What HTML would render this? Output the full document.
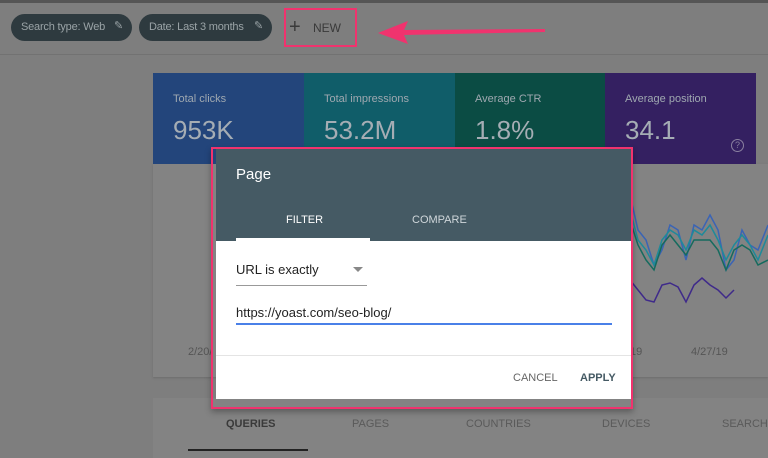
<!DOCTYPE html>
<html><head><style>
body{margin:0;width:768px;height:451px;overflow:hidden;background:#7e7e7e;font-family:"Liberation Sans",sans-serif;position:relative}
.a{position:absolute}
.chip{background:#2e3a3f;color:#9aa3a6;border-radius:14px;height:27px;top:14px;font-size:11px;line-height:27px;padding-left:10px;box-sizing:border-box;white-space:nowrap;letter-spacing:-0.2px}
.card{top:73px;height:91px;width:151px}
.card .l{position:absolute;left:20px;top:20px;font-size:11px;color:#9fa8b0}
.card .v{position:absolute;left:20px;top:42px;font-size:26px;color:#a5adb4}
.tab{font-size:11px;color:#5a5a5a;top:418px}
</style></head><body>
<div class="a" style="left:0;top:0;width:768px;height:3px;background:#555"></div>
<div class="a" style="left:0;top:54px;width:768px;height:1px;background:#727272"></div>
<div class="chip a" style="left:11px;width:121px">Search type: Web <span style="position:absolute;right:9px;top:-1px">✎</span></div>
<div class="chip a" style="left:139px;width:133px">Date: Last 3 months <span style="position:absolute;right:9px;top:-1px">✎</span></div>
<div class="a" style="left:284px;top:8px;width:69px;height:35px;border:2px solid #f0336e"></div>
<div class="a" style="left:289px;top:16px;font-size:20px;color:#3a3a3a">+</div>
<div class="a" style="left:313px;top:21px;font-size:12px;color:#3a3a3a">NEW</div>
<svg class="a" style="left:370px;top:18px" width="180" height="30"><polygon points="8,15 38,3 34,12 175,11 175,14 34,17 38,26" fill="#f0336e"/></svg>
<div class="a" style="left:153px;top:164px;width:615px;height:213px;background:#838383;box-shadow:0 1px 2px #6c6c6c"></div>
<div class="a" style="left:153px;top:398px;width:615px;height:60px;background:#838383"></div>
<div class="card a" style="left:153px;background:#23457b"><div class="l">Total clicks</div><div class="v">953K</div></div>
<div class="card a" style="left:304px;background:#105d69"><div class="l">Total impressions</div><div class="v">53.2M</div></div>
<div class="card a" style="left:455px;background:#0b4c44"><div class="l">Average CTR</div><div class="v">1.8%</div></div>
<div class="card a" style="left:605px;width:151px;background:#342061"><div class="l">Average position</div><div class="v">34.1</div><div style="position:absolute;right:12px;top:66px;width:11px;height:11px;border:1px solid #8a80a0;border-radius:50%;font-size:9px;color:#8a80a0;text-align:center;line-height:11px">?</div></div>
<svg class="a" style="left:630px;top:190px" width="138" height="130" fill="none" stroke-width="1.5"><polyline points="0,5 8,40 16,50 24,75 32,60 40,35 48,40 56,70 64,35 72,40 80,25 88,40 96,80 104,70 112,40 120,55 128,60 138,35" stroke="#3a64b5"/><polyline points="0,20 8,50 16,60 24,75 32,50 40,40 48,45 56,60 64,40 72,45 80,35 88,50 96,70 104,55 112,45 120,55 128,70 138,45" stroke="#1e8a9a"/><polyline points="0,30 8,55 16,70 24,80 32,55 40,45 48,55 56,65 64,50 72,50 80,50 88,60 96,80 104,60 112,55 120,60 128,75 138,70" stroke="#156b5e"/><polyline points="0,90 8,100 16,110 24,112 32,95 40,93 48,97 56,112 64,95 72,88 80,95 88,100 96,108 104,100" stroke="#3f2a8a"/></svg>
<div class="a" style="left:188px;top:346px;font-size:11px;color:#555">2/20/</div>
<div class="a" style="left:630px;top:346px;font-size:11px;color:#555">19</div>
<div class="a" style="left:691px;top:346px;font-size:11px;color:#555">4/27/19</div>
<div class="a tab" style="left:226px;color:#3a3a3a;font-weight:bold">QUERIES</div>
<div class="a tab" style="left:352px">PAGES</div>
<div class="a tab" style="left:466px">COUNTRIES</div>
<div class="a tab" style="left:602px">DEVICES</div>
<div class="a tab" style="left:722px">SEARCH</div>
<div class="a" style="left:188px;top:449px;width:120px;height:2px;background:#222"></div>
<div class="a" style="left:211px;top:147px;width:418px;height:258px;border:2px solid #f0336e;box-shadow:0 3px 6px rgba(0,0,0,.3)"></div>
<div class="a" style="left:216px;top:149px;width:415px;height:92px;background:#455a64"></div>
<div class="a" style="left:236px;top:166px;font-size:15px;color:#fff">Page</div>
<div class="a" style="left:286px;top:214px;font-size:11px;color:#fff">FILTER</div>
<div class="a" style="left:412px;top:214px;font-size:11px;color:#cfd6da">COMPARE</div>
<div class="a" style="left:236px;top:238px;width:134px;height:3px;background:#fff"></div>
<div class="a" style="left:216px;top:241px;width:415px;height:158px;background:#fff"></div>
<div class="a" style="left:236px;top:262px;font-size:13px;color:#222">URL is exactly</div>
<div class="a" style="left:353px;top:267px;width:0;height:0;border-left:5px solid transparent;border-right:5px solid transparent;border-top:5px solid #888"></div>
<div class="a" style="left:236px;top:285px;width:131px;height:1px;background:#999"></div>
<div class="a" style="left:236px;top:305px;font-size:13px;color:#222">https://yoast.com/seo-blog/</div>
<div class="a" style="left:236px;top:323px;width:376px;height:2px;background:#4a80e8"></div>
<div class="a" style="left:216px;top:355px;width:415px;height:1px;background:#e4e4e4"></div>
<div class="a" style="left:513px;top:372px;font-size:11px;color:#666">CANCEL</div>
<div class="a" style="left:580px;top:372px;font-size:11px;color:#455a64;font-weight:bold">APPLY</div>
</body></html>
